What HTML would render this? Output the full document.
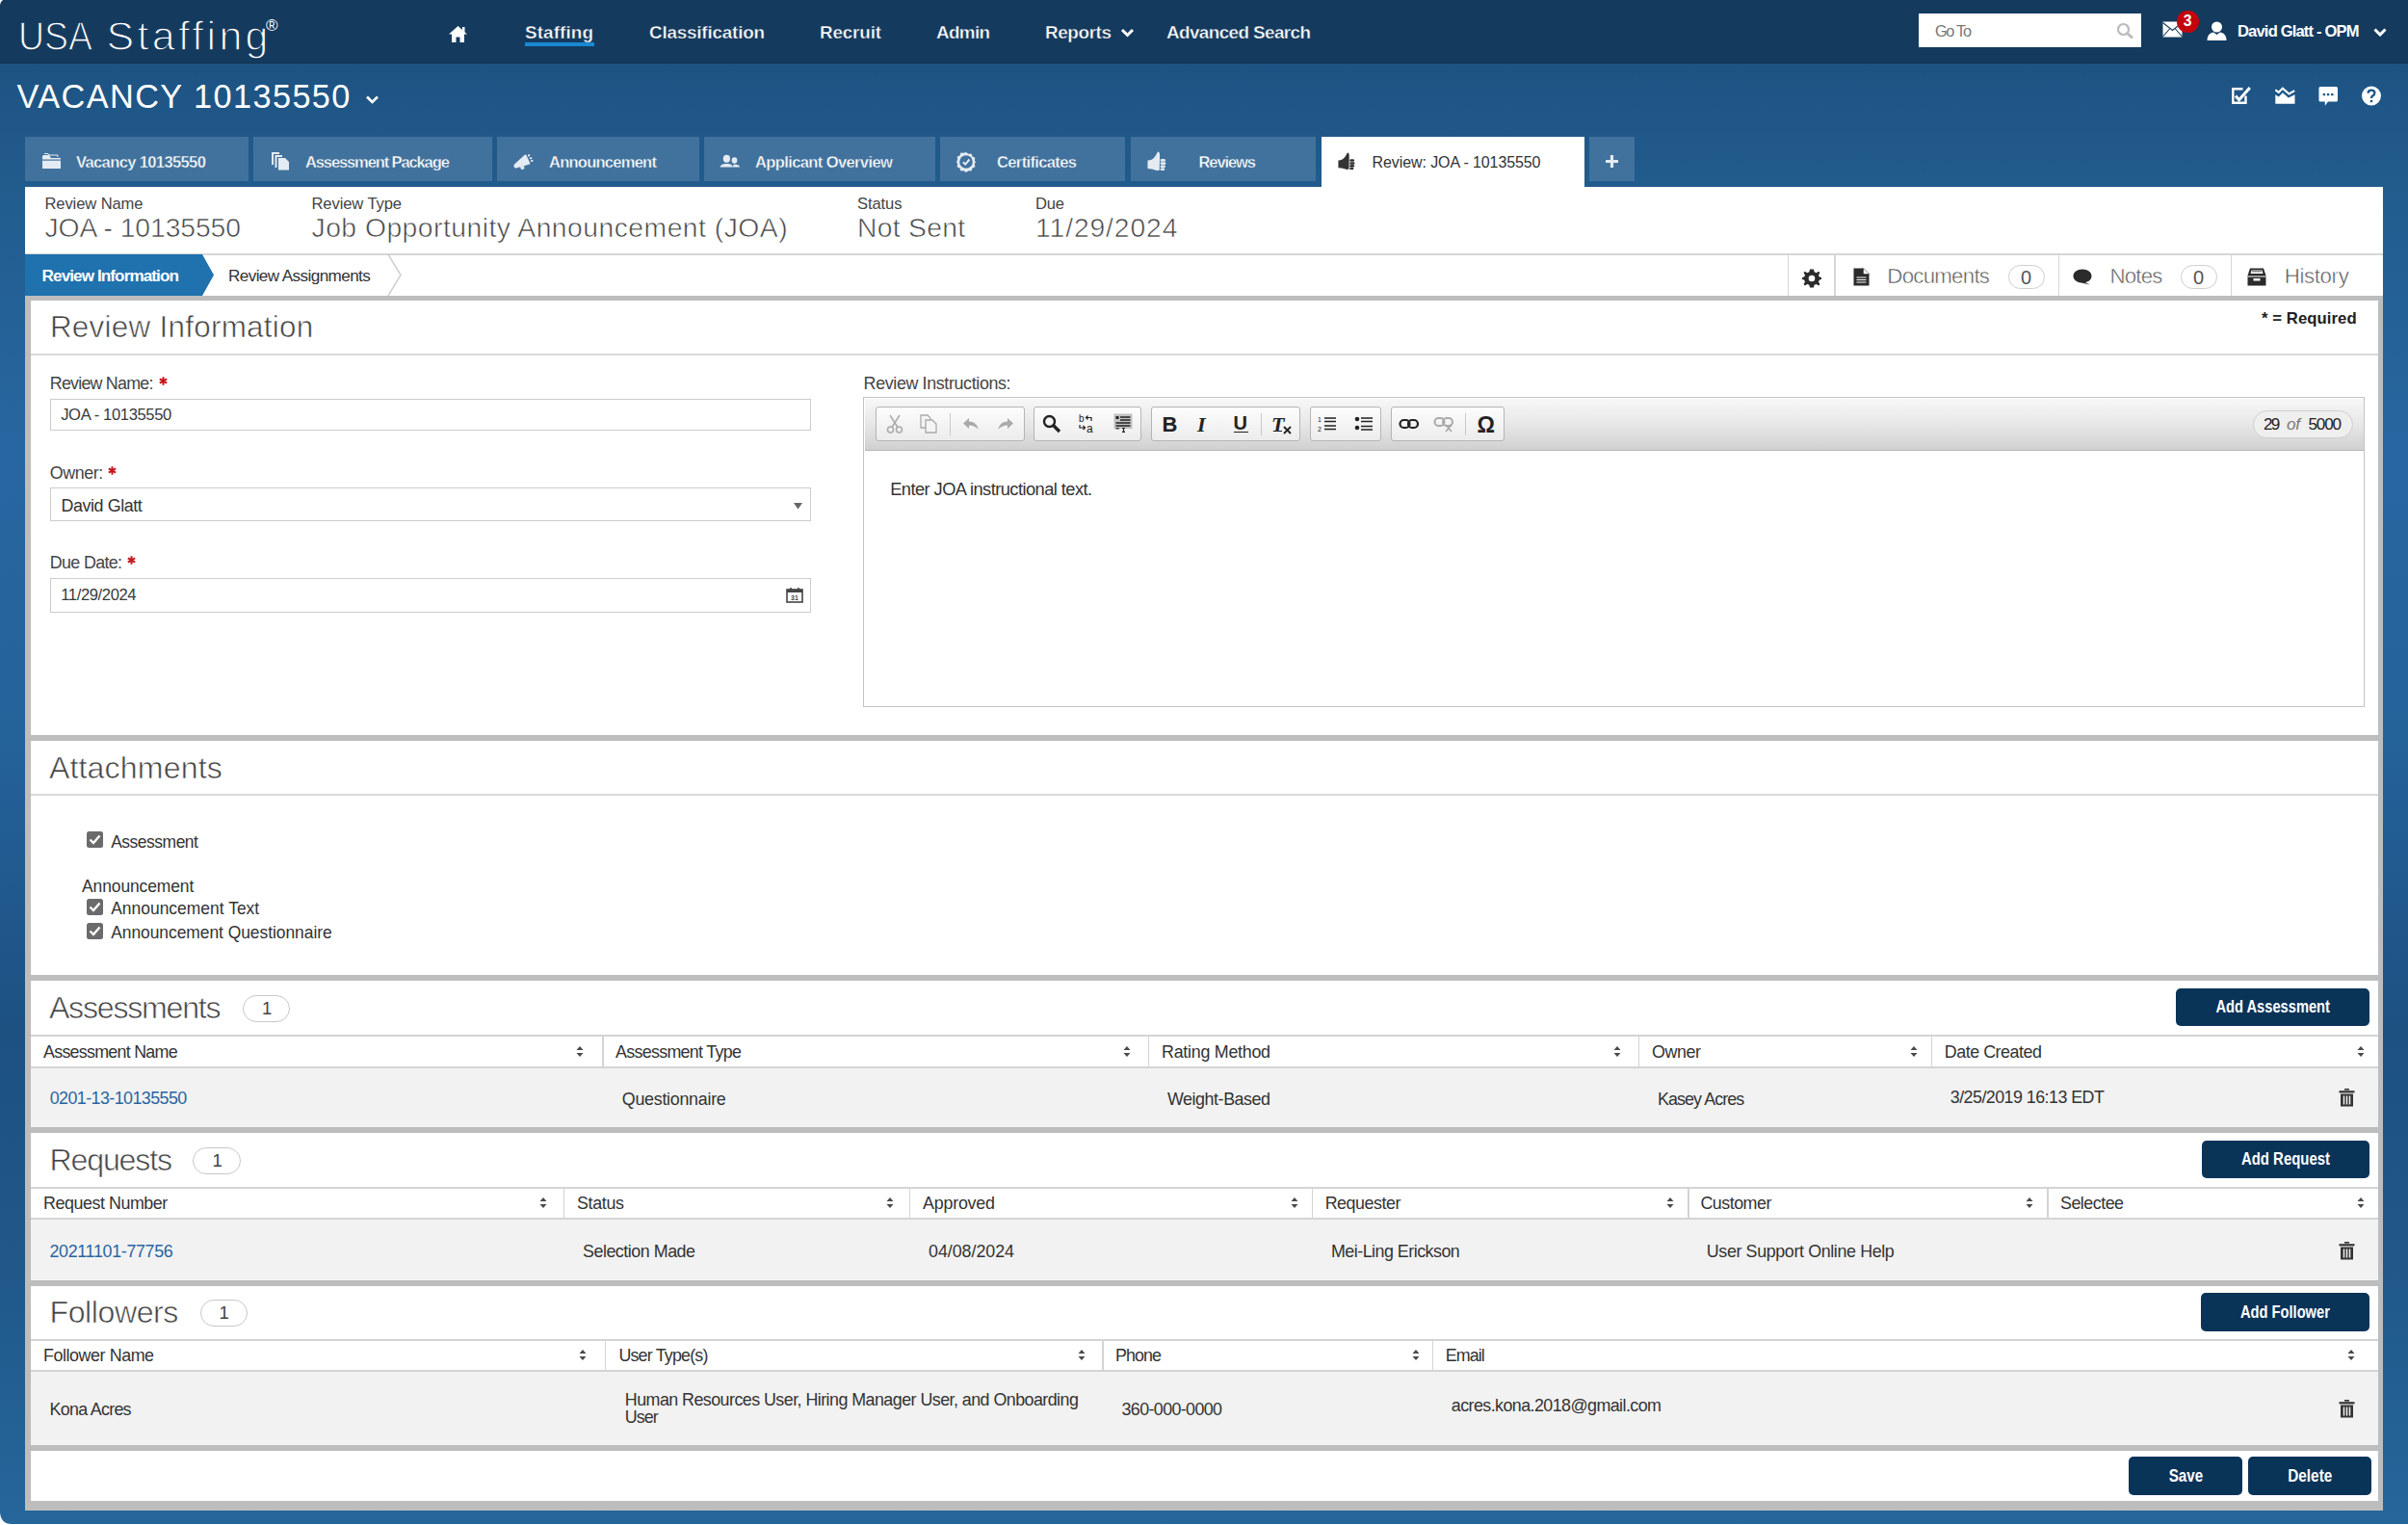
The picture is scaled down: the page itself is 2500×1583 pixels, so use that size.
<!DOCTYPE html>
<html><head><meta charset="utf-8"><title>USA Staffing - Review</title>
<style>
html,body{margin:0;padding:0;width:2500px;height:1583px;overflow:hidden;background:#fff;}
body{position:relative;font-family:"Liberation Sans",sans-serif;}
.t{position:absolute;white-space:pre;}
.r{position:absolute;}
</style></head><body>
<div class="r" style="left:0px;top:0px;width:2500px;height:66px;background:#143a5e;"></div>
<div class="r" style="left:0px;top:64.5px;width:2500px;height:1.5px;background:#11334f;"></div>
<div class="r" style="left:0px;top:66px;width:2500px;height:1517px;background:linear-gradient(180deg,#1d5383 0px,#215c8d 128px,#2766a0 400px,#24629a 700px,#1c5182 1000px,#1f5889 1250px,#26669b 1518px);"></div>
<div class="t" style="left:19.0px;top:15.8px;font-size:43.00px;line-height:43.00px;color:#fff;-webkit-text-stroke:1.3px #143a5e;transform:scaleX(0.8709);transform-origin:0 0;">USA</div>
<div class="t" style="left:110.5px;top:15.8px;font-size:43.00px;line-height:43.00px;color:#fff;letter-spacing:3.28px;-webkit-text-stroke:1.3px #143a5e;">Staffing</div>
<div class="t" style="left:276.0px;top:18.3px;font-size:17.00px;line-height:17.00px;color:#fff;">®</div>
<svg class="r" style="left:465px;top:26px" width="21" height="19" viewBox="0 0 21 19"><path d="M10.5 1 L20 9.5 L17 9.5 L17 18 L12.5 18 L12.5 12.5 L8.5 12.5 L8.5 18 L4 18 L4 9.5 L1 9.5 Z" fill="#fff"/><rect x="15" y="2" width="2.5" height="5" fill="#fff"/></svg>
<div class="t" style="left:545.0px;top:24.7px;font-size:18.86px;line-height:18.86px;color:#fff;font-weight:bold;letter-spacing:0.12px;-webkit-text-stroke:0.4px #15395c;">Staffing</div>
<div class="t" style="left:674.0px;top:24.7px;font-size:18.86px;line-height:18.86px;color:#fff;font-weight:bold;letter-spacing:-0.20px;-webkit-text-stroke:0.4px #15395c;">Classification</div>
<div class="t" style="left:851.0px;top:24.7px;font-size:18.86px;line-height:18.86px;color:#fff;font-weight:bold;letter-spacing:-0.16px;-webkit-text-stroke:0.4px #15395c;">Recruit</div>
<div class="t" style="left:972.0px;top:24.7px;font-size:18.86px;line-height:18.86px;color:#fff;font-weight:bold;letter-spacing:-0.67px;-webkit-text-stroke:0.4px #15395c;">Admin</div>
<div class="t" style="left:1085.0px;top:24.7px;font-size:18.86px;line-height:18.86px;color:#fff;font-weight:bold;letter-spacing:-0.38px;-webkit-text-stroke:0.4px #15395c;">Reports</div>
<div class="t" style="left:1211.0px;top:24.7px;font-size:18.86px;line-height:18.86px;color:#fff;font-weight:bold;letter-spacing:-0.59px;-webkit-text-stroke:0.4px #15395c;">Advanced Search</div>
<div class="r" style="left:545px;top:44px;width:72px;height:4px;background:#1a88d2;"></div>
<svg class="r" style="left:1163px;top:29px" width="15" height="10" viewBox="0 0 15 10"><path d="M2 2 L7.5 7.5 L13 2" stroke="#fff" stroke-width="3" fill="none"/></svg>
<div class="r" style="left:1992px;top:14px;width:231px;height:35px;background:#fff;"></div>
<div class="t" style="left:2009.0px;top:24.3px;font-size:16.29px;line-height:16.29px;color:#777;letter-spacing:-1.29px;">Go To</div>
<svg class="r" style="left:2197px;top:23px" width="19" height="18" viewBox="0 0 19 18"><circle cx="7.5" cy="7.5" r="5.5" stroke="#bbb" stroke-width="2.2" fill="none"/><path d="M11.5 11.5 L17 16.5" stroke="#bbb" stroke-width="3"/></svg>
<svg class="r" style="left:2245px;top:22px" width="21" height="17" viewBox="0 0 21 17"><rect x="0.5" y="0.5" width="20" height="16" fill="#fff"/><path d="M0.5 1.5 L10.5 9.5 L20.5 1.5 M0.5 16 L7.5 8 M20.5 16 L13.5 8" stroke="#15395c" stroke-width="1.1" fill="none"/></svg>
<div class="r" style="left:2260.3px;top:11.2px;width:22.5px;height:22.5px;border-radius:50%;background:#c3050b;"></div>
<div class="t" style="left:2266.8px;top:14.4px;font-size:15.71px;line-height:15.71px;color:#fff;font-weight:bold;">3</div>
<svg class="r" style="left:2291px;top:22px" width="21" height="20" viewBox="0 0 21 20"><circle cx="10.5" cy="6" r="5.5" fill="#fff"/><path d="M0.5 20 C0.5 14 4 12 7 11.5 L10.5 14 L14 11.5 C17 12 20.5 14 20.5 20 Z" fill="#fff"/></svg>
<div class="t" style="left:2323.0px;top:25.3px;font-size:16.57px;line-height:16.57px;color:#fff;font-weight:bold;letter-spacing:-0.84px;">David Glatt - OPM</div>
<svg class="r" style="left:2464px;top:29px" width="14" height="9" viewBox="0 0 14 9"><path d="M1.5 1.5 L7 7 L12.5 1.5" stroke="#fff" stroke-width="3" fill="none"/></svg>
<div class="t" style="left:17.5px;top:82.7px;font-size:34.29px;line-height:34.29px;color:#fff;letter-spacing:1.42px;">VACANCY 10135550</div>
<svg class="r" style="left:379px;top:98px" width="15" height="11" viewBox="0 0 15 11"><path d="M2 2.5 L7.5 8 L13 2.5" stroke="#fff" stroke-width="2.6" fill="none"/></svg>
<svg class="r" style="left:2316px;top:89px" width="21" height="20" viewBox="0 0 21 20"><path d="M15.5 10.5 L15.5 17.8 L2.3 17.8 L2.3 3.3 L12.5 3.3" stroke="#fff" stroke-width="2.4" fill="none"/><path d="M5 10.5 L8.6 14.8 L19.8 2" stroke="#fff" stroke-width="3" fill="none"/></svg>
<svg class="r" style="left:2362px;top:90px" width="21" height="19" viewBox="0 0 21 19"><path d="M0.3 3.3 L3.8 5.8 L7.9 1.6 L14.5 7.5 L20.2 4.2" stroke="#fff" stroke-width="2.1" fill="none" stroke-linejoin="miter"/><path d="M0.3 8.2 L3.8 10.4 L7.9 6.2 L13.9 11.4 L20.5 8.2 L20.5 17.8 L0.3 17.8 Z" fill="#fff"/></svg>
<svg class="r" style="left:2407px;top:89px" width="21" height="22" viewBox="0 0 21 22"><path d="M2 1 L18.5 1 Q20 1 20 2.5 L20 15 Q20 16.5 18.5 16.5 L10 16.5 L6.8 20.8 L6.8 16.5 L2 16.5 Q0.5 16.5 0.5 15 L0.5 2.5 Q0.5 1 2 1 Z" fill="#fff"/><rect x="4.7" y="8" width="2.4" height="2.2" fill="#1e5686"/><rect x="8.9" y="8" width="2.4" height="2.2" fill="#1e5686"/><rect x="13.1" y="8" width="2.4" height="2.2" fill="#1e5686"/></svg>
<svg class="r" style="left:2451px;top:88.5px" width="22" height="21" viewBox="0 0 22 21"><circle cx="11" cy="10.5" r="10" fill="#fff"/><path d="M7.6 7.8 Q7.6 4.6 11 4.6 Q14.4 4.6 14.4 7.6 Q14.4 9.5 12.2 10.6 Q11 11.3 11 13" stroke="#1e5686" stroke-width="2.3" fill="none"/><rect x="9.8" y="14.8" width="2.4" height="2.4" fill="#1e5686"/></svg>
<div class="r" style="left:26px;top:142px;width:232px;height:46px;background:#41729d;"></div>
<svg class="r" style="left:42.7px;top:159px" width="21" height="17" viewBox="0 0 21 17"><path d="M1 3 L1 16 L20 16 L20 5 L10 5 L8 2 L2 2 Z" fill="#e4ebf2"/><path d="M3 0.5 L7 0.5 L8 2 L17 2 L17 4" stroke="#e4ebf2" stroke-width="1" fill="none"/><rect x="1" y="6.5" width="19" height="1.2" fill="#41729d"/></svg>
<div class="t" style="left:79.0px;top:161.1px;font-size:16.57px;line-height:16.57px;color:#fff;font-weight:bold;letter-spacing:-0.65px;-webkit-text-stroke:0.4px #41729d;">Vacancy 10135550</div>
<div class="r" style="left:263px;top:142px;width:248px;height:46px;background:#41729d;"></div>
<svg class="r" style="left:280.5px;top:157px" width="20" height="20" viewBox="0 0 20 20"><path d="M1 1 L9 1 L9 3 L3 3 L3 14 L1 14 Z" fill="#e4ebf2"/><path d="M4.5 4 L12 4 L12 6 L6.5 6 L6.5 17 L4.5 17 Z" fill="#e4ebf2"/><path d="M8 7 L15 7 L19 11 L19 19.5 L8 19.5 Z" fill="#e4ebf2"/></svg>
<div class="t" style="left:317.0px;top:161.1px;font-size:16.57px;line-height:16.57px;color:#fff;font-weight:bold;letter-spacing:-1.15px;-webkit-text-stroke:0.4px #41729d;">Assessment Package</div>
<div class="r" style="left:516px;top:142px;width:210px;height:46px;background:#41729d;"></div>
<svg class="r" style="left:533px;top:158px" width="21" height="19" viewBox="0 0 21 19"><path d="M0.5 13 L12 2.5 Q13 2.2 13.5 3 L17.3 11.5 Q17.5 12.3 16.8 12.5 L3 16.5 Q1 16.5 0.5 15 Z" fill="#e4ebf2"/><path d="M7 15 L8 17.8 Q9.5 18.3 11.5 17 L11 14 Z" fill="#e4ebf2"/><ellipse cx="16.1" cy="3.3" rx="1" ry="1.4" fill="#e4ebf2" transform="rotate(30 16.1 3.3)"/><ellipse cx="18.1" cy="6.2" rx="1.4" ry="1" fill="#e4ebf2"/><ellipse cx="19.2" cy="9" rx="1.4" ry="1" fill="#e4ebf2"/></svg>
<div class="t" style="left:570.0px;top:161.1px;font-size:16.57px;line-height:16.57px;color:#fff;font-weight:bold;letter-spacing:-0.78px;-webkit-text-stroke:0.4px #41729d;">Announcement</div>
<div class="r" style="left:731px;top:142px;width:240px;height:46px;background:#41729d;"></div>
<svg class="r" style="left:747px;top:160px" width="22" height="15" viewBox="0 0 22 15"><ellipse cx="7.4" cy="4.7" rx="3.6" ry="4" fill="#e4ebf2"/><path d="M0.5 13.6 Q1 10.5 5.5 10 L9.3 10 Q13.5 10.5 14 13.6 Z" fill="#e4ebf2"/><ellipse cx="15.5" cy="6.5" rx="2.8" ry="3.3" fill="#e4ebf2"/><path d="M14 13.6 L14.5 10.8 L17 10.8 Q21 11.2 21 13.6 Z" fill="#e4ebf2"/></svg>
<div class="t" style="left:784.0px;top:161.1px;font-size:16.57px;line-height:16.57px;color:#fff;font-weight:bold;letter-spacing:-0.64px;-webkit-text-stroke:0.4px #41729d;">Applicant Overview</div>
<div class="r" style="left:976px;top:142px;width:192px;height:46px;background:#41729d;"></div>
<svg class="r" style="left:991.5px;top:157px" width="22" height="22" viewBox="0 0 22 22"><path d="M11 1 L13.5 2.8 L16.5 2.5 L17.6 5.4 L20.4 6.8 L19.8 9.8 L21 11 L19.8 13.2 L20.4 16.2 L17.6 17.6 L16.5 20.5 L13.5 20.2 L11 22 L8.5 20.2 L5.5 20.5 L4.4 17.6 L1.6 16.2 L2.2 13.2 L1 11 L2.2 8.8 L1.6 5.8 L4.4 4.4 L5.5 1.5 L8.5 1.8 Z" fill="#e4ebf2"/><circle cx="11" cy="11" r="6.8" fill="#41729d"/><path d="M7.8 11.2 L10.2 13.6 L14.5 8.5" stroke="#e4ebf2" stroke-width="2" fill="none"/></svg>
<div class="t" style="left:1035.0px;top:161.1px;font-size:16.57px;line-height:16.57px;color:#fff;font-weight:bold;letter-spacing:-0.66px;-webkit-text-stroke:0.4px #41729d;">Certificates</div>
<div class="r" style="left:1174px;top:142px;width:192px;height:46px;background:#41729d;"></div>
<svg class="r" style="left:1191px;top:157px" width="20" height="21" viewBox="0 0 20 21"><path d="M0.5 9.5 Q5.5 9.5 8.5 5 Q10 2.5 10.5 1.2 Q11.5 -0.2 12.5 1.2 Q13.3 2.5 13 6 L12.8 19.5 Q10.5 20.5 8.5 19.5 Q5 18 0.5 18 Z" fill="#e4ebf2"/><rect x="13.6" y="8" width="5.4" height="2.8" rx="1.4" fill="#e4ebf2"/><rect x="13.6" y="11.2" width="5.8" height="2.8" rx="1.4" fill="#e4ebf2"/><rect x="13.6" y="14.4" width="5.4" height="2.8" rx="1.4" fill="#e4ebf2"/><rect x="13.6" y="17.4" width="4.6" height="2.6" rx="1.3" fill="#e4ebf2"/></svg>
<div class="t" style="left:1244.5px;top:161.1px;font-size:16.57px;line-height:16.57px;color:#fff;font-weight:bold;letter-spacing:-1.14px;-webkit-text-stroke:0.4px #41729d;">Reviews</div>
<div class="r" style="left:1372px;top:142px;width:273px;height:52px;background:#fff;"></div>
<svg class="r" style="left:1389px;top:158px" width="18" height="19" viewBox="0 0 20 21"><path d="M0.5 9.5 Q5.5 9.5 8.5 5 Q10 2.5 10.5 1.2 Q11.5 -0.2 12.5 1.2 Q13.3 2.5 13 6 L12.8 19.5 Q10.5 20.5 8.5 19.5 Q5 18 0.5 18 Z" fill="#333"/><rect x="13.6" y="8" width="5.4" height="2.8" rx="1.4" fill="#333"/><rect x="13.6" y="11.2" width="5.8" height="2.8" rx="1.4" fill="#333"/><rect x="13.6" y="14.4" width="5.4" height="2.8" rx="1.4" fill="#333"/><rect x="13.6" y="17.4" width="4.6" height="2.6" rx="1.3" fill="#333"/></svg>
<div class="t" style="left:1424.6px;top:161.2px;font-size:16.00px;line-height:16.00px;color:#333;letter-spacing:-0.10px;">Review: JOA - 10135550</div>
<div class="r" style="left:1650px;top:142px;width:47px;height:46px;background:#41729d;"></div>
<svg class="r" style="left:1666px;top:160px" width="15" height="15" viewBox="0 0 15 15"><path d="M7.5 1 L7.5 14 M1 7.5 L14 7.5" stroke="#e4ebf2" stroke-width="3.2"/></svg>
<div class="r" style="left:26px;top:193.5px;width:2448px;height:113.5px;background:#fff;"></div>
<div class="t" style="left:46.5px;top:203.9px;font-size:16.57px;line-height:16.57px;color:#444;letter-spacing:-0.11px;">Review Name</div>
<div class="t" style="left:46.5px;top:222.2px;font-size:28.29px;line-height:28.29px;color:#444;letter-spacing:-0.07px;-webkit-text-stroke:0.6px #fff;">JOA - 10135550</div>
<div class="t" style="left:323.5px;top:203.9px;font-size:16.57px;line-height:16.57px;color:#444;letter-spacing:-0.10px;">Review Type</div>
<div class="t" style="left:323.5px;top:222.2px;font-size:28.29px;line-height:28.29px;color:#444;letter-spacing:0.49px;-webkit-text-stroke:0.6px #fff;">Job Opportunity Announcement (JOA)</div>
<div class="t" style="left:890.0px;top:203.9px;font-size:16.57px;line-height:16.57px;color:#444;letter-spacing:-0.10px;">Status</div>
<div class="t" style="left:890.0px;top:222.2px;font-size:28.29px;line-height:28.29px;color:#444;letter-spacing:0.28px;-webkit-text-stroke:0.6px #fff;">Not Sent</div>
<div class="t" style="left:1075.0px;top:203.9px;font-size:16.57px;line-height:16.57px;color:#444;letter-spacing:-0.17px;">Due</div>
<div class="t" style="left:1075.0px;top:222.2px;font-size:28.29px;line-height:28.29px;color:#444;letter-spacing:0.89px;-webkit-text-stroke:0.6px #fff;">11/29/2024</div>
<div class="r" style="left:26px;top:263px;width:2448px;height:2px;background:#d6d6d6;"></div>
<svg class="r" style="left:26px;top:264px" width="400" height="43" viewBox="0 0 400 43"><path d="M0 0 L184 0 L196 21.5 L184 43 L0 43 Z" fill="#1f72ae"/><path d="M377 0 L390 21.5 L377 43" stroke="#cfcfcf" stroke-width="1.5" fill="none"/></svg>
<div class="t" style="left:43.6px;top:278.2px;font-size:17.14px;line-height:17.14px;color:#fff;font-weight:bold;letter-spacing:-0.92px;">Review Information</div>
<div class="t" style="left:237.0px;top:278.2px;font-size:17.14px;line-height:17.14px;color:#333;letter-spacing:-0.60px;">Review Assignments</div>
<div class="r" style="left:1855.5px;top:265px;width:1.5px;height:42px;background:#d6d6d6;"></div>
<div class="r" style="left:1904px;top:265px;width:1.5px;height:42px;background:#d6d6d6;"></div>
<div class="r" style="left:2136.5px;top:265px;width:1.5px;height:42px;background:#d6d6d6;"></div>
<div class="r" style="left:2315.5px;top:265px;width:1.5px;height:42px;background:#d6d6d6;"></div>
<svg class="r" style="left:1871px;top:279px" width="20" height="20" viewBox="0 0 20 20"><path d="M10 0.5 L12 0.5 L12.6 3.2 L14.8 4.2 L17.1 2.7 L18.5 4.1 L17 6.4 L17.9 8.6 L20 9 L20 11 L17.9 11.5 L17 13.7 L18.5 16 L17.1 17.4 L14.8 15.9 L12.6 16.8 L12 19.5 L8 19.5 L7.4 16.8 L5.2 15.9 L2.9 17.4 L1.5 16 L3 13.7 L2.1 11.5 L0 11 L0 9 L2.1 8.6 L3 6.4 L1.5 4.1 L2.9 2.7 L5.2 4.2 L7.4 3.2 L8 0.5 Z" fill="#2b2b2b"/><circle cx="10" cy="10" r="3.3" fill="#fff"/></svg>
<svg class="r" style="left:1924px;top:278px" width="17" height="19" viewBox="0 0 17 19"><path d="M0.5 0.5 L11 0.5 L16.5 6 L16.5 18.5 L0.5 18.5 Z" fill="#2b2b2b"/><path d="M10.5 0.5 L10.5 6.5 L16.5 6.5" fill="#fff"/><path d="M10 0.5 L10 7 L16.5 7" stroke="#2b2b2b" stroke-width="1" fill="none"/><path d="M3.5 10 L13.5 10 M3.5 12.5 L13.5 12.5 M3.5 15 L13.5 15" stroke="#fff" stroke-width="1.1"/></svg>
<div class="t" style="left:1959.3px;top:276.2px;font-size:22.29px;line-height:22.29px;color:#555;letter-spacing:-0.75px;-webkit-text-stroke:0.5px #fff;">Documents</div>
<div class="r" style="left:2085px;top:275px;width:36px;height:23px;border:1.2px solid #cfcfcf;border-radius:13px;"></div>
<div class="t" style="left:2098.0px;top:277.8px;font-size:20.00px;line-height:20.00px;color:#555;">0</div>
<svg class="r" style="left:2152px;top:279px" width="20" height="17" viewBox="0 0 20 17"><path d="M10 0.5 C15.5 0.5 19.5 3.5 19.5 7.5 C19.5 11 16.5 13.5 13 14.2 L18 16.5 L8.5 14.5 C4 14 0.5 11.5 0.5 7.5 C0.5 3.5 4.5 0.5 10 0.5 Z" fill="#2b2b2b"/></svg>
<div class="t" style="left:2190.4px;top:276.2px;font-size:22.29px;line-height:22.29px;color:#555;letter-spacing:-0.80px;-webkit-text-stroke:0.5px #fff;">Notes</div>
<div class="r" style="left:2264px;top:275px;width:36px;height:23px;border:1.2px solid #cfcfcf;border-radius:13px;"></div>
<div class="t" style="left:2277.0px;top:277.8px;font-size:20.00px;line-height:20.00px;color:#555;">0</div>
<svg class="r" style="left:2333px;top:278px" width="20" height="19" viewBox="0 0 20 19"><path d="M3 0.5 L17 0.5 L19.5 8 L19.5 18.5 L0.5 18.5 L0.5 8 Z" fill="#2b2b2b"/><path d="M4.5 2.5 L15.5 2.5 L16.5 6 L3.5 6 Z" fill="#fff"/><path d="M5 3.8 L15 3.8" stroke="#2b2b2b" stroke-width="0.8"/><rect x="6.5" y="11" width="7" height="2.5" fill="#fff"/><rect x="0.5" y="8.5" width="19" height="1" fill="#fff"/></svg>
<div class="t" style="left:2371.8px;top:276.2px;font-size:22.29px;line-height:22.29px;color:#555;letter-spacing:-0.39px;-webkit-text-stroke:0.5px #fff;">History</div>
<div class="r" style="left:26px;top:307px;width:2448px;height:1261px;background:#bdbdbd;"></div>
<div class="r" style="left:31.5px;top:312px;width:2437.0px;height:451px;background:#fff"></div>
<div class="r" style="left:31.5px;top:769px;width:2437.0px;height:243px;background:#fff"></div>
<div class="r" style="left:31.5px;top:1018px;width:2437.0px;height:152px;background:#fff"></div>
<div class="r" style="left:31.5px;top:1176px;width:2437.0px;height:153px;background:#fff"></div>
<div class="r" style="left:31.5px;top:1334.5px;width:2437.0px;height:165.5px;background:#fff"></div>
<div class="r" style="left:31.5px;top:1506px;width:2437.0px;height:52px;background:#fff"></div>
<div class="t" style="left:51.9px;top:324.3px;font-size:31.43px;line-height:31.43px;color:#444;letter-spacing:0.26px;-webkit-text-stroke:0.6px #fff;">Review Information</div>
<div class="t" style="left:2348.0px;top:322.6px;font-size:16.71px;line-height:16.71px;color:#222;font-weight:bold;letter-spacing:0.07px;">* = Required</div>
<div class="r" style="left:31.5px;top:367px;width:2437.0px;height:2px;background:#d9d9d9;"></div>
<div class="t" style="left:51.8px;top:390.4px;font-size:17.86px;line-height:17.86px;color:#444;letter-spacing:-0.78px;">Review Name:</div>
<svg class="r" style="left:164.7px;top:391.3px" width="9" height="9" viewBox="-4.5 -4.5 9 9"><path d="M0 -4.2 L0 4.2 M-3.7 -2.1 L3.7 2.1 M-3.7 2.1 L3.7 -2.1" stroke="#c4161c" stroke-width="2"/></svg>
<div class="r" style="left:51.5px;top:414px;width:790px;height:33px;border:1.5px solid #cccccc;box-sizing:border-box;background:#fff"></div>
<div class="t" style="left:63.2px;top:422.6px;font-size:16.60px;line-height:16.60px;color:#3a3a3a;letter-spacing:-0.37px;">JOA - 10135550</div>
<div class="t" style="left:51.8px;top:482.6px;font-size:17.86px;line-height:17.86px;color:#444;letter-spacing:-0.43px;">Owner:</div>
<svg class="r" style="left:112.0px;top:483.7px" width="9" height="9" viewBox="-4.5 -4.5 9 9"><path d="M0 -4.2 L0 4.2 M-3.7 -2.1 L3.7 2.1 M-3.7 2.1 L3.7 -2.1" stroke="#c4161c" stroke-width="2"/></svg>
<div class="r" style="left:51.5px;top:506px;width:790px;height:35px;border:1.5px solid #cccccc;box-sizing:border-box;background:#fff"></div>
<div class="t" style="left:63.4px;top:516.8px;font-size:17.86px;line-height:17.86px;color:#333;letter-spacing:-0.39px;">David Glatt</div>
<svg class="r" style="left:824px;top:522px" width="9" height="7" viewBox="0 0 9 7"><path d="M0 0 L9 0 L4.5 6.5 Z" fill="#666"/></svg>
<div class="t" style="left:51.8px;top:576.1px;font-size:17.86px;line-height:17.86px;color:#444;letter-spacing:-0.65px;">Due Date:</div>
<svg class="r" style="left:131.6px;top:577.2px" width="9" height="9" viewBox="-4.5 -4.5 9 9"><path d="M0 -4.2 L0 4.2 M-3.7 -2.1 L3.7 2.1 M-3.7 2.1 L3.7 -2.1" stroke="#c4161c" stroke-width="2"/></svg>
<div class="r" style="left:51.5px;top:600px;width:790px;height:36px;border:1.5px solid #cccccc;box-sizing:border-box;background:#fff"></div>
<div class="t" style="left:63.2px;top:609.6px;font-size:16.60px;line-height:16.60px;color:#3a3a3a;letter-spacing:-0.38px;">11/29/2024</div>
<svg class="r" style="left:816px;top:609px" width="18" height="17" viewBox="0 0 18 17"><rect x="1" y="3" width="16" height="13" stroke="#444" stroke-width="1.6" fill="none"/><rect x="1" y="3" width="16" height="3" fill="#444"/><path d="M5 1 L5 4 M13 1 L13 4" stroke="#444" stroke-width="1.6"/><text x="9" y="14" font-size="7" font-family="Liberation Sans" font-weight="bold" text-anchor="middle" fill="#444">31</text></svg>
<div class="t" style="left:896.6px;top:390.3px;font-size:17.86px;line-height:17.86px;color:#444;letter-spacing:-0.36px;">Review Instructions:</div>
<div class="r" style="left:896px;top:412px;width:1559px;height:322px;border:1.5px solid #c4c4c4;box-sizing:border-box;background:#fff"></div>
<div class="r" style="left:897.5px;top:413.5px;width:1556px;height:54.5px;background:linear-gradient(180deg,#f7f7f7 0%,#e9e9e9 45%,#cfd1cf 100%);border-bottom:1.5px solid #b6b6b6;box-sizing:border-box"></div>
<div class="r" style="left:908.5px;top:422px;width:155.5px;height:35.5px;border:1.2px solid #b5b5b5;border-radius:3px;box-sizing:border-box;background:linear-gradient(180deg,#fdfdfd,#ececec)"></div>
<div class="r" style="left:1073.3px;top:422px;width:111.90000000000009px;height:35.5px;border:1.2px solid #b5b5b5;border-radius:3px;box-sizing:border-box;background:linear-gradient(180deg,#fdfdfd,#ececec)"></div>
<div class="r" style="left:1194.5px;top:422px;width:155.5px;height:35.5px;border:1.2px solid #b5b5b5;border-radius:3px;box-sizing:border-box;background:linear-gradient(180deg,#fdfdfd,#ececec)"></div>
<div class="r" style="left:1359.7px;top:422px;width:74.70000000000005px;height:35.5px;border:1.2px solid #b5b5b5;border-radius:3px;box-sizing:border-box;background:linear-gradient(180deg,#fdfdfd,#ececec)"></div>
<div class="r" style="left:1444px;top:422px;width:118.29999999999995px;height:35.5px;border:1.2px solid #b5b5b5;border-radius:3px;box-sizing:border-box;background:linear-gradient(180deg,#fdfdfd,#ececec)"></div>
<div class="t" style="left:924.2px;top:498.9px;font-size:18.29px;line-height:18.29px;color:#333;letter-spacing:-0.56px;">Enter JOA instructional text.</div>
<div class="r" style="left:2338.5px;top:425.5px;width:104px;height:29.5px;border:1.2px solid #cfcfcf;border-radius:15px;box-sizing:border-box;background:#efefef"></div>
<div class="t" style="left:2350.0px;top:432.2px;font-size:17.14px;line-height:17.14px;color:#222;letter-spacing:-1.77px;">29</div>
<div class="t" style="left:2374.0px;top:432.2px;font-size:17.14px;line-height:17.14px;color:#777;font-style:italic;letter-spacing:-0.30px;">of</div>
<div class="t" style="left:2396.5px;top:432.2px;font-size:17.14px;line-height:17.14px;color:#222;letter-spacing:-1.21px;">5000</div>
<svg class="r" style="left:919.8px;top:430.0px" width="18" height="20" viewBox="0 0 18 20"><circle cx="4.5" cy="16" r="3" stroke="#aaaaaa" stroke-width="1.5" fill="none"/><circle cx="13.5" cy="16" r="3" stroke="#aaaaaa" stroke-width="1.5" fill="none"/><path d="M6 13.5 L14 1 M12 13.5 L4 1" stroke="#aaaaaa" stroke-width="1.5"/></svg>
<svg class="r" style="left:955.3px;top:430.0px" width="18" height="20" viewBox="0 0 18 20"><path d="M1 1 L8 1 L11 4 L11 14 L1 14 Z" stroke="#aaaaaa" stroke-width="1.3" fill="#f4f4f4"/><path d="M6 6 L13 6 L17 10 L17 19 L6 19 Z" stroke="#aaaaaa" stroke-width="1.3" fill="#f4f4f4"/></svg>
<div class="r" style="left:986px;top:429px;width:1.2000000000000455px;height:23px;background:#c9c9c9;"></div>
<svg class="r" style="left:999.0px;top:433.0px" width="18" height="14" viewBox="0 0 18 14"><path d="M7 1 L1 6.5 L7 12 L7 8.5 Q13 8.5 17 13 Q15 4.5 7 4.5 Z" fill="#aaaaaa"/></svg>
<svg class="r" style="left:1035.0px;top:433.0px" width="18" height="14" viewBox="0 0 18 14"><path d="M11 1 L17 6.5 L11 12 L11 8.5 Q5 8.5 1 13 Q3 4.5 11 4.5 Z" fill="#aaaaaa"/></svg>
<svg class="r" style="left:1082.0px;top:430.0px" width="20" height="20" viewBox="0 0 20 20"><circle cx="7.5" cy="7.5" r="5.5" stroke="#222" stroke-width="2.4" fill="none"/><path d="M11.5 11.5 L18 18" stroke="#222" stroke-width="3.4"/></svg>
<svg class="r" style="left:1119.4px;top:429.0px" width="20" height="22" viewBox="0 0 20 22"><text x="1" y="9" font-size="10" font-family="Liberation Sans" fill="#222">b</text><text x="9" y="20" font-size="12" font-family="Liberation Sans" fill="#222">a</text><path d="M2 12 L2 15 L7 15 M5.5 13 L7.5 15 L5.5 17 M14 8 L14 4.5 L9 4.5 M10.5 2.5 L8.5 4.5 L10.5 6.5" stroke="#222" stroke-width="1.2" fill="none"/></svg>
<svg class="r" style="left:1155.5px;top:429.0px" width="20" height="20" viewBox="0 0 20 20"><rect x="0.5" y="0.5" width="19" height="15.5" fill="#c2c2c2"/><rect x="2.5" y="3" width="3" height="3" fill="#222"/><path d="M7 4 L17.5 4 M7 7 L17.5 7 M2.5 10 L17.5 10 M2.5 13 L17.5 13" stroke="#222" stroke-width="1.3"/><path d="M2.5 15.8 L6 15.8" stroke="#222" stroke-width="1.2"/><path d="M9 15.5 L12 15.5 M10.5 15.5 L10.5 19.3 M9 19.3 L12 19.3" stroke="#222" stroke-width="1.2"/></svg>
<div class="t" style="left:1206.5px;top:429.9px;font-size:22.00px;line-height:22.00px;color:#222;font-weight:bold;">B</div>
<div class="t" style="left:1243.0px;top:429.6px;font-size:22.00px;line-height:22.00px;color:#222;font-weight:bold;font-style:italic;font-family:'Liberation Serif',serif;">I</div>
<div class="t" style="left:1280.5px;top:429.3px;font-size:20.00px;line-height:20.00px;color:#222;font-weight:bold;">U</div>
<div class="r" style="left:1281px;top:447.5px;width:15px;height:1.8000000000000114px;background:#222;"></div>
<div class="r" style="left:1309px;top:429px;width:1.2000000000000455px;height:23px;background:#c9c9c9;"></div>
<div class="t" style="left:1320.0px;top:429.6px;font-size:22.00px;line-height:22.00px;color:#222;font-weight:bold;font-style:italic;font-family:'Liberation Serif',serif;">T</div>
<div class="r" style="left:1321.5px;top:446.5px;width:9.5px;height:1.5px;background:#222;"></div>
<svg class="r" style="left:1331.5px;top:442.0px" width="9" height="9" viewBox="0 0 9 9"><path d="M1 1 L8 8 M8 1 L1 8" stroke="#222" stroke-width="1.8"/></svg>
<svg class="r" style="left:1368.0px;top:431.0px" width="20" height="18" viewBox="0 0 20 18"><text x="0" y="7" font-size="7" font-family="Liberation Sans" fill="#222">1</text><text x="0" y="17" font-size="7" font-family="Liberation Sans" fill="#222">2</text><path d="M7 3 L19 3 M7 6.5 L19 6.5 M7 11 L19 11 M7 14.5 L19 14.5" stroke="#222" stroke-width="1.6"/></svg>
<svg class="r" style="left:1405.8px;top:431.0px" width="20" height="18" viewBox="0 0 20 18"><circle cx="3" cy="4" r="2.3" fill="#222"/><circle cx="3" cy="13" r="2.3" fill="#222"/><path d="M7 3 L19 3 M7 6.5 L19 6.5 M7 11.5 L19 11.5 M7 15 L19 15" stroke="#222" stroke-width="1.6"/></svg>
<svg class="r" style="left:1451.9px;top:433.0px" width="22" height="14" viewBox="0 0 22 14"><rect x="1.5" y="3" width="10" height="8" rx="4" stroke="#222" stroke-width="2.2" fill="none"/><rect x="10" y="3" width="10" height="8" rx="4" stroke="#222" stroke-width="2.2" fill="none"/></svg>
<svg class="r" style="left:1488.2px;top:431.0px" width="22" height="18" viewBox="0 0 22 18"><rect x="1.5" y="3" width="10" height="8" rx="4" stroke="#aaaaaa" stroke-width="2" fill="none"/><rect x="10" y="3" width="10" height="8" rx="4" stroke="#aaaaaa" stroke-width="2" fill="none"/><path d="M13 10 L19 17 M19 10 L13 17" stroke="#aaaaaa" stroke-width="1.6"/></svg>
<div class="r" style="left:1521px;top:429px;width:1.2000000000000455px;height:23px;background:#c9c9c9;"></div>
<div class="t" style="left:1533.5px;top:430.2px;font-size:23.00px;line-height:23.00px;color:#222;font-weight:bold;">Ω</div>
<div class="t" style="left:50.9px;top:780.7px;font-size:32.14px;line-height:32.14px;color:#444;letter-spacing:0.13px;-webkit-text-stroke:0.6px #fff;">Attachments</div>
<div class="r" style="left:31.5px;top:824px;width:2437.0px;height:2px;background:#d9d9d9;"></div>
<svg class="r" style="left:89.7px;top:863px" width="17" height="17" viewBox="0 0 17 17"><rect x="0" y="0" width="17" height="17" rx="2.5" fill="#6b6b6b"/><path d="M3.5 8.5 L7 12 L13.5 4.5" stroke="#fff" stroke-width="2.3" fill="none"/></svg>
<div class="t" style="left:115.2px;top:865.8px;font-size:17.43px;line-height:17.43px;color:#333;letter-spacing:-0.46px;">Assessment</div>
<div class="t" style="left:85.1px;top:911.9px;font-size:17.43px;line-height:17.43px;color:#333;letter-spacing:-0.09px;">Announcement</div>
<svg class="r" style="left:89.7px;top:933px" width="17" height="17" viewBox="0 0 17 17"><rect x="0" y="0" width="17" height="17" rx="2.5" fill="#6b6b6b"/><path d="M3.5 8.5 L7 12 L13.5 4.5" stroke="#fff" stroke-width="2.3" fill="none"/></svg>
<div class="t" style="left:115.2px;top:935.3px;font-size:17.43px;line-height:17.43px;color:#333;letter-spacing:0.02px;">Announcement Text</div>
<svg class="r" style="left:89.7px;top:958px" width="17" height="17" viewBox="0 0 17 17"><rect x="0" y="0" width="17" height="17" rx="2.5" fill="#6b6b6b"/><path d="M3.5 8.5 L7 12 L13.5 4.5" stroke="#fff" stroke-width="2.3" fill="none"/></svg>
<div class="t" style="left:115.2px;top:960.3px;font-size:17.43px;line-height:17.43px;color:#333;letter-spacing:-0.04px;">Announcement Questionnaire</div>
<div class="t" style="left:50.9px;top:1029.6px;font-size:32.14px;line-height:32.14px;color:#444;letter-spacing:-1.23px;-webkit-text-stroke:0.6px #fff;">Assessments</div>
<div class="r" style="left:252.3px;top:1032.8px;width:48.599999999999966px;height:28.200000000000045px;border:1.3px solid #c8c8c8;border-radius:15px;box-sizing:border-box"></div>
<div class="t" style="left:272.1px;top:1037.5px;font-size:18.57px;line-height:18.57px;color:#444;">1</div>
<div class="r" style="left:2259.3px;top:1026px;width:200.69999999999982px;height:39.40000000000009px;background:#0a3358;border-radius:5px;"></div>
<div class="t" style="left:2289.0px;top:1037.3px;font-size:17.5px;line-height:17.5px;color:#fff;font-weight:bold;transform:scaleX(0.839);transform-origin:50% 50%">Add Assessment</div>
<div class="r" style="left:31.5px;top:1073.5px;width:2437.0px;height:2.0px;background:#d4d4d4;"></div>
<div class="r" style="left:31.5px;top:1106.5px;width:2437.0px;height:2.0px;background:#d4d4d4;"></div>
<div class="r" style="left:31.5px;top:1108.5px;width:2437.0px;height:61.5px;background:#f2f2f2;"></div>
<div class="r" style="left:625px;top:1075.5px;width:1.5px;height:31.0px;background:#d4d4d4;"></div>
<div class="r" style="left:1191.7px;top:1075.5px;width:1.5px;height:31.0px;background:#d4d4d4;"></div>
<div class="r" style="left:1700.8px;top:1075.5px;width:1.5px;height:31.0px;background:#d4d4d4;"></div>
<div class="r" style="left:2004.7px;top:1075.5px;width:1.5px;height:31.0px;background:#d4d4d4;"></div>
<div class="t" style="left:45.0px;top:1083.6px;font-size:17.86px;line-height:17.86px;color:#333;letter-spacing:-0.73px;">Assessment Name</div>
<div class="t" style="left:639.0px;top:1083.6px;font-size:17.86px;line-height:17.86px;color:#333;letter-spacing:-0.69px;">Assessment Type</div>
<div class="t" style="left:1206.0px;top:1083.6px;font-size:17.86px;line-height:17.86px;color:#333;letter-spacing:-0.26px;">Rating Method</div>
<div class="t" style="left:1715.0px;top:1083.6px;font-size:17.86px;line-height:17.86px;color:#333;letter-spacing:-0.40px;">Owner</div>
<div class="t" style="left:2018.8px;top:1083.6px;font-size:17.86px;line-height:17.86px;color:#333;letter-spacing:-0.47px;">Date Created</div>
<svg class="r" style="left:598.3px;top:1084.5px" width="8" height="13" viewBox="0 0 8 13"><path d="M4 1 L7.5 5 L0.5 5 Z M4 12 L7.5 8 L0.5 8 Z" fill="#4a4a4a"/></svg>
<svg class="r" style="left:1165.5px;top:1084.5px" width="8" height="13" viewBox="0 0 8 13"><path d="M4 1 L7.5 5 L0.5 5 Z M4 12 L7.5 8 L0.5 8 Z" fill="#4a4a4a"/></svg>
<svg class="r" style="left:1674.9px;top:1084.5px" width="8" height="13" viewBox="0 0 8 13"><path d="M4 1 L7.5 5 L0.5 5 Z M4 12 L7.5 8 L0.5 8 Z" fill="#4a4a4a"/></svg>
<svg class="r" style="left:1983.0px;top:1084.5px" width="8" height="13" viewBox="0 0 8 13"><path d="M4 1 L7.5 5 L0.5 5 Z M4 12 L7.5 8 L0.5 8 Z" fill="#4a4a4a"/></svg>
<svg class="r" style="left:2446.5px;top:1084.5px" width="8" height="13" viewBox="0 0 8 13"><path d="M4 1 L7.5 5 L0.5 5 Z M4 12 L7.5 8 L0.5 8 Z" fill="#4a4a4a"/></svg>
<div class="t" style="left:51.7px;top:1132.4px;font-size:17.86px;line-height:17.86px;color:#2a65a0;letter-spacing:-0.56px;">0201-13-10135550</div>
<div class="t" style="left:645.8px;top:1132.8px;font-size:17.86px;line-height:17.86px;color:#333;letter-spacing:-0.27px;">Questionnaire</div>
<div class="t" style="left:1212.0px;top:1132.8px;font-size:17.86px;line-height:17.86px;color:#333;letter-spacing:-0.44px;">Weight-Based</div>
<div class="t" style="left:1721.0px;top:1132.8px;font-size:17.86px;line-height:17.86px;color:#333;letter-spacing:-0.91px;">Kasey Acres</div>
<div class="t" style="left:2024.8px;top:1130.8px;font-size:17.86px;line-height:17.86px;color:#333;letter-spacing:-0.54px;">3/25/2019 16:13 EDT</div>
<svg class="r" style="left:2428px;top:1130px" width="17" height="19" viewBox="0 0 17 19"><path d="M6 0.8 L11 0.8" stroke="#333" stroke-width="1.6"/><rect x="0.5" y="2.2" width="16" height="2.2" fill="#333"/><path d="M2 5.5 L15 5.5 L15 18.5 L2 18.5 Z" fill="#333"/><path d="M5.5 7.5 L5.5 16.5 M8.5 7.5 L8.5 16.5 M11.5 7.5 L11.5 16.5" stroke="#f2f2f2" stroke-width="1.5"/></svg>
<div class="t" style="left:51.5px;top:1188.1px;font-size:32.14px;line-height:32.14px;color:#444;letter-spacing:-1.18px;-webkit-text-stroke:0.6px #fff;">Requests</div>
<div class="r" style="left:200.3px;top:1190.8px;width:49.39999999999998px;height:28.600000000000136px;border:1.3px solid #c8c8c8;border-radius:15px;box-sizing:border-box"></div>
<div class="t" style="left:220.5px;top:1195.9px;font-size:18.57px;line-height:18.57px;color:#444;">1</div>
<div class="r" style="left:2285.7px;top:1184px;width:174.30000000000018px;height:38.799999999999955px;background:#0a3358;border-radius:5px;"></div>
<div class="t" style="left:2318.9px;top:1195.0px;font-size:17.5px;line-height:17.5px;color:#fff;font-weight:bold;transform:scaleX(0.852);transform-origin:50% 50%">Add Request</div>
<div class="r" style="left:31.5px;top:1232px;width:2437.0px;height:2px;background:#d4d4d4;"></div>
<div class="r" style="left:31.5px;top:1263.5px;width:2437.0px;height:2.0px;background:#d4d4d4;"></div>
<div class="r" style="left:31.5px;top:1265.5px;width:2437.0px;height:63.5px;background:#f2f2f2;"></div>
<div class="r" style="left:584.5px;top:1234px;width:1.5px;height:29.5px;background:#d4d4d4;"></div>
<div class="r" style="left:943.5px;top:1234px;width:1.5px;height:29.5px;background:#d4d4d4;"></div>
<div class="r" style="left:1361.8px;top:1234px;width:1.5px;height:29.5px;background:#d4d4d4;"></div>
<div class="r" style="left:1752px;top:1234px;width:1.5px;height:29.5px;background:#d4d4d4;"></div>
<div class="r" style="left:2125px;top:1234px;width:1.5px;height:29.5px;background:#d4d4d4;"></div>
<div class="t" style="left:45.0px;top:1241.0px;font-size:17.86px;line-height:17.86px;color:#333;letter-spacing:-0.44px;">Request Number</div>
<div class="t" style="left:599.0px;top:1241.0px;font-size:17.86px;line-height:17.86px;color:#333;letter-spacing:-0.33px;">Status</div>
<div class="t" style="left:958.0px;top:1241.0px;font-size:17.86px;line-height:17.86px;color:#333;letter-spacing:-0.21px;">Approved</div>
<div class="t" style="left:1375.7px;top:1241.0px;font-size:17.86px;line-height:17.86px;color:#333;letter-spacing:-0.46px;">Requester</div>
<div class="t" style="left:1765.4px;top:1241.0px;font-size:17.86px;line-height:17.86px;color:#333;letter-spacing:-0.49px;">Customer</div>
<div class="t" style="left:2139.0px;top:1241.0px;font-size:17.86px;line-height:17.86px;color:#333;letter-spacing:-0.50px;">Selectee</div>
<svg class="r" style="left:559.5px;top:1242.25px" width="8" height="13" viewBox="0 0 8 13"><path d="M4 1 L7.5 5 L0.5 5 Z M4 12 L7.5 8 L0.5 8 Z" fill="#4a4a4a"/></svg>
<svg class="r" style="left:919.5px;top:1242.25px" width="8" height="13" viewBox="0 0 8 13"><path d="M4 1 L7.5 5 L0.5 5 Z M4 12 L7.5 8 L0.5 8 Z" fill="#4a4a4a"/></svg>
<svg class="r" style="left:1339.5px;top:1242.25px" width="8" height="13" viewBox="0 0 8 13"><path d="M4 1 L7.5 5 L0.5 5 Z M4 12 L7.5 8 L0.5 8 Z" fill="#4a4a4a"/></svg>
<svg class="r" style="left:1729.5px;top:1242.25px" width="8" height="13" viewBox="0 0 8 13"><path d="M4 1 L7.5 5 L0.5 5 Z M4 12 L7.5 8 L0.5 8 Z" fill="#4a4a4a"/></svg>
<svg class="r" style="left:2103.0px;top:1242.25px" width="8" height="13" viewBox="0 0 8 13"><path d="M4 1 L7.5 5 L0.5 5 Z M4 12 L7.5 8 L0.5 8 Z" fill="#4a4a4a"/></svg>
<svg class="r" style="left:2447.0px;top:1242.25px" width="8" height="13" viewBox="0 0 8 13"><path d="M4 1 L7.5 5 L0.5 5 Z M4 12 L7.5 8 L0.5 8 Z" fill="#4a4a4a"/></svg>
<div class="t" style="left:51.5px;top:1290.6px;font-size:17.86px;line-height:17.86px;color:#2a65a0;letter-spacing:-0.32px;">20211101-77756</div>
<div class="t" style="left:605.0px;top:1290.6px;font-size:17.86px;line-height:17.86px;color:#333;letter-spacing:-0.47px;">Selection Made</div>
<div class="t" style="left:964.0px;top:1290.6px;font-size:17.86px;line-height:17.86px;color:#333;letter-spacing:-0.04px;">04/08/2024</div>
<div class="t" style="left:1382.0px;top:1290.6px;font-size:17.86px;line-height:17.86px;color:#333;letter-spacing:-0.51px;">Mei-Ling Erickson</div>
<div class="t" style="left:1771.8px;top:1290.6px;font-size:17.86px;line-height:17.86px;color:#333;letter-spacing:-0.37px;">User Support Online Help</div>
<svg class="r" style="left:2428px;top:1289px" width="17" height="19" viewBox="0 0 17 19"><path d="M6 0.8 L11 0.8" stroke="#333" stroke-width="1.6"/><rect x="0.5" y="2.2" width="16" height="2.2" fill="#333"/><path d="M2 5.5 L15 5.5 L15 18.5 L2 18.5 Z" fill="#333"/><path d="M5.5 7.5 L5.5 16.5 M8.5 7.5 L8.5 16.5 M11.5 7.5 L11.5 16.5" stroke="#f2f2f2" stroke-width="1.5"/></svg>
<div class="t" style="left:51.5px;top:1345.8px;font-size:32.14px;line-height:32.14px;color:#444;letter-spacing:-0.44px;-webkit-text-stroke:0.6px #fff;">Followers</div>
<div class="r" style="left:207.5px;top:1348.5px;width:49.0px;height:28.5px;border:1.3px solid #c8c8c8;border-radius:15px;box-sizing:border-box"></div>
<div class="t" style="left:227.5px;top:1353.5px;font-size:18.57px;line-height:18.57px;color:#444;">1</div>
<div class="r" style="left:2285px;top:1342.4px;width:175px;height:39.19999999999982px;background:#0a3358;border-radius:5px;"></div>
<div class="t" style="left:2317.1px;top:1353.6px;font-size:17.5px;line-height:17.5px;color:#fff;font-weight:bold;transform:scaleX(0.839);transform-origin:50% 50%">Add Follower</div>
<div class="r" style="left:31.5px;top:1389.5px;width:2437.0px;height:2.0px;background:#d4d4d4;"></div>
<div class="r" style="left:31.5px;top:1422.3px;width:2437.0px;height:2.0px;background:#d4d4d4;"></div>
<div class="r" style="left:31.5px;top:1424.3px;width:2437.0px;height:75.70000000000005px;background:#f2f2f2;"></div>
<div class="r" style="left:627.9px;top:1391.5px;width:1.5px;height:30.799999999999955px;background:#d4d4d4;"></div>
<div class="r" style="left:1144px;top:1391.5px;width:1.5px;height:30.799999999999955px;background:#d4d4d4;"></div>
<div class="r" style="left:1486.9px;top:1391.5px;width:1.5px;height:30.799999999999955px;background:#d4d4d4;"></div>
<div class="t" style="left:45.0px;top:1399.4px;font-size:17.86px;line-height:17.86px;color:#333;letter-spacing:-0.42px;">Follower Name</div>
<div class="t" style="left:642.4px;top:1399.4px;font-size:17.86px;line-height:17.86px;color:#333;letter-spacing:-0.81px;">User Type(s)</div>
<div class="t" style="left:1158.0px;top:1399.4px;font-size:17.86px;line-height:17.86px;color:#333;letter-spacing:-0.91px;">Phone</div>
<div class="t" style="left:1500.8px;top:1399.4px;font-size:17.86px;line-height:17.86px;color:#333;letter-spacing:-0.91px;">Email</div>
<svg class="r" style="left:600.5px;top:1400.4px" width="8" height="13" viewBox="0 0 8 13"><path d="M4 1 L7.5 5 L0.5 5 Z M4 12 L7.5 8 L0.5 8 Z" fill="#4a4a4a"/></svg>
<svg class="r" style="left:1119.0px;top:1400.4px" width="8" height="13" viewBox="0 0 8 13"><path d="M4 1 L7.5 5 L0.5 5 Z M4 12 L7.5 8 L0.5 8 Z" fill="#4a4a4a"/></svg>
<svg class="r" style="left:1466.0px;top:1400.4px" width="8" height="13" viewBox="0 0 8 13"><path d="M4 1 L7.5 5 L0.5 5 Z M4 12 L7.5 8 L0.5 8 Z" fill="#4a4a4a"/></svg>
<svg class="r" style="left:2437.0px;top:1400.4px" width="8" height="13" viewBox="0 0 8 13"><path d="M4 1 L7.5 5 L0.5 5 Z M4 12 L7.5 8 L0.5 8 Z" fill="#4a4a4a"/></svg>
<div class="t" style="left:51.5px;top:1454.6px;font-size:17.86px;line-height:17.86px;color:#333;letter-spacing:-0.70px;">Kona Acres</div>
<div class="t" style="left:648.8px;top:1445.3px;font-size:17.86px;line-height:17.86px;color:#333;letter-spacing:-0.54px;">Human Resources User, Hiring Manager User, and Onboarding</div>
<div class="t" style="left:648.8px;top:1462.8px;font-size:17.86px;line-height:17.86px;color:#333;letter-spacing:-0.90px;">User</div>
<div class="t" style="left:1164.5px;top:1454.6px;font-size:17.86px;line-height:17.86px;color:#333;letter-spacing:-0.61px;">360-000-0000</div>
<div class="t" style="left:1506.8px;top:1451.3px;font-size:17.86px;line-height:17.86px;color:#333;letter-spacing:-0.56px;">acres.kona.2018@gmail.com</div>
<svg class="r" style="left:2428px;top:1453px" width="17" height="19" viewBox="0 0 17 19"><path d="M6 0.8 L11 0.8" stroke="#333" stroke-width="1.6"/><rect x="0.5" y="2.2" width="16" height="2.2" fill="#333"/><path d="M2 5.5 L15 5.5 L15 18.5 L2 18.5 Z" fill="#333"/><path d="M5.5 7.5 L5.5 16.5 M8.5 7.5 L8.5 16.5 M11.5 7.5 L11.5 16.5" stroke="#f2f2f2" stroke-width="1.5"/></svg>
<div class="r" style="left:2210px;top:1512.4px;width:118px;height:39.299999999999955px;background:#0a3358;border-radius:5px;"></div>
<div class="t" style="left:2248.6px;top:1523.6px;font-size:17.5px;line-height:17.5px;color:#fff;font-weight:bold;transform:scaleX(0.869);transform-origin:50% 50%">Save</div>
<div class="r" style="left:2334px;top:1512.4px;width:127.59999999999991px;height:39.299999999999955px;background:#0a3358;border-radius:5px;"></div>
<div class="t" style="left:2371.5px;top:1523.6px;font-size:17.5px;line-height:17.5px;color:#fff;font-weight:bold;transform:scaleX(0.876);transform-origin:50% 50%">Delete</div>
<div class="r" style="left:0px;top:1582px;width:2500px;height:1px;background:#fff;"></div>
<svg class="r" style="left:0px;top:1570px" width="12" height="13" viewBox="0 0 12 13"><path d="M0 0 L0 13 L12 13 L12 12 Q1 12 0 0 Z" fill="#fff"/></svg>
<svg class="r" style="left:0px;top:0px" width="3" height="5" viewBox="0 0 3 5"><path d="M0 0 L3 0 Q0.6 1.5 0 5 Z" fill="#fff"/></svg>
</body></html>
